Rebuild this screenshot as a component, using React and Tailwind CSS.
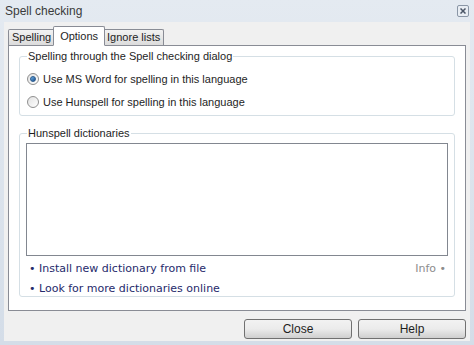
import React from "react";

function Radio({ checked }) {
  return (
    <span className="w-[12px] h-[12px] rounded-full border border-[#8f8f8f] bg-gradient-to-br from-[#e2e2e2] to-[#ffffff] flex items-center justify-center shrink-0">
      {checked && (
        <span className="w-[6px] h-[6px] rounded-full bg-gradient-to-br from-[#6fb4e8] to-[#1d4f8f] border border-[#2a5a8c]" />
      )}
    </span>
  );
}

function Tab({ label, active }) {
  if (active) {
    return (
      <div className="h-[20px] px-[6px] -mb-px mx-[-2px] z-10 relative bg-white border border-[#898c95] border-b-white rounded-t-[2px] flex items-center">
        {label}
      </div>
    );
  }
  return (
    <div className="h-[16px] px-[3px] bg-gradient-to-b from-[#f2f2f2] to-[#dcdcdc] border border-[#898c95] border-b-0 rounded-t-[2px] flex items-center">
      {label}
    </div>
  );
}

export default function App() {
  const ui = { fontFamily: '"Liberation Sans", Arial, sans-serif' };
  const link = { fontFamily: '"DejaVu Sans", Verdana, sans-serif' };

  return (
    <div className="w-[474px] h-[345px] bg-gradient-to-b from-[#e4eaf1] to-[#d4dde8] flex flex-col text-[11px] text-[#1e1e1e]" style={ui}>
      <div className="h-[22px] flex items-center justify-between pl-[5px] pr-[5px]">
        <span className="text-[12px] text-[#3a3a3a]">Spell checking</span>
        <span className="w-[12px] h-[12px] border border-[#8a96a6] rounded-[2px] bg-[#e8edf3] flex items-center justify-center">
          <svg width="6" height="6" viewBox="0 0 6 6">
            <path d="M0.5 0.5 L5.5 5.5 M5.5 0.5 L0.5 5.5" stroke="#4a5566" strokeWidth="1.5" />
          </svg>
        </span>
      </div>

      <div className="flex-1 mx-[4px] mb-[4px] bg-[#f0f0f0] flex flex-col px-[4px] pt-[4px]">
        <div className="flex items-end h-[19px]">
          <Tab label="Spelling" />
          <Tab label="Options" active />
          <Tab label="Ignore lists" />
        </div>

        <div className="h-[266px] bg-white border border-[#898c95] px-[10px] pt-[2px] flex flex-col gap-[9px]">
          <fieldset className="border border-[#d5dfe5] rounded-[3px] px-[7px] pb-[6px] h-[68px]">
            <legend className="px-[1px] text-[#1e1e1e]">Spelling through the Spell checking dialog</legend>
            <div className="flex items-center gap-[4px] h-[23px] mt-[3px]">
              <Radio checked />
              <span>Use MS Word for spelling in this language</span>
            </div>
            <div className="flex items-center gap-[4px] h-[23px]">
              <Radio />
              <span>Use Hunspell for spelling in this language</span>
            </div>
          </fieldset>

          <fieldset className="border border-[#d5dfe5] rounded-[3px] px-[6px] h-[172px]">
            <legend className="ml-[1px] px-[1px]">Hunspell dictionaries</legend>
            <div className="h-[113px] border border-[#828790] bg-white mt-[1px]" />
            <div className="flex justify-between items-center mt-[5px] text-[11px] pl-[3px] pr-[2px]" style={link}>
              <span className="text-[#262a6b]">• Install new dictionary from file</span>
              <span className="text-[#8c8c8c]">Info •</span>
            </div>
            <div className="mt-[4px] text-[11px] pl-[3px] text-[#262a6b]" style={link}>
              • Look for more dictionaries online
            </div>
          </fieldset>
        </div>

        <div className="flex justify-end gap-[6px] pt-[8px]">
          <button className="w-[108px] h-[20px] rounded-[3px] border border-[#707070] bg-gradient-to-b from-[#f2f2f2] via-[#ebebeb] to-[#cfcfcf] text-[12px]">
            Close
          </button>
          <button className="w-[108px] h-[20px] rounded-[3px] border border-[#707070] bg-gradient-to-b from-[#f2f2f2] via-[#ebebeb] to-[#cfcfcf] text-[12px]">
            Help
          </button>
        </div>
      </div>
    </div>
  );
}
